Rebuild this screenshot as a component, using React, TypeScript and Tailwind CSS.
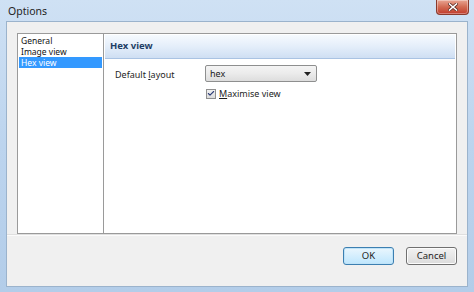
import { Check } from 'lucide-react';

const font = { fontFamily: '"Noto Sans", "DejaVu Sans", sans-serif' };

function CloseButton() {
  return (
    <div className="w-[33px] h-[15px] rounded-b-[4px] border border-t-0 border-[#8a3a2c] bg-gradient-to-b from-[#e8a593] via-[#d26a52] to-[#c0392b] flex items-center justify-center shadow-[inset_0_0_0_1px_rgba(255,255,255,0.35)]">
      <svg width="10" height="8" viewBox="0 0 10 8">
        <path d="M1.5 1 L8.5 7 M8.5 1 L1.5 7" stroke="#5a2a22" strokeWidth="3" strokeLinecap="square" />
        <path d="M1.5 1 L8.5 7 M8.5 1 L1.5 7" stroke="#ffffff" strokeWidth="1.6" strokeLinecap="square" />
      </svg>
    </div>
  );
}

function DialogButton({ label, active }: { label: string; active?: boolean }) {
  return (
    <button
      type="button"
      className={`w-[51px] h-[18px] rounded-[3px] border text-[9.5px] text-[#1e1e1e] flex items-center justify-center bg-gradient-to-b ${
        active
          ? 'border-[#3c7fb1] from-[#eaf6fd] to-[#bee6fd] shadow-[inset_0_0_0_1px_#bfe3f8]'
          : 'border-[#707070] from-[#f2f2f2] to-[#dcdcdc] shadow-[inset_0_0_0_1px_#fcfcfc]'
      }`}
    >
      {label}
    </button>
  );
}

export default function App() {
  const items = ['General', 'Image view', 'Hex view'];
  const selected = 2;

  return (
    <div
      className="w-[474px] h-[292px] flex flex-col bg-gradient-to-b from-[#cfe1f4] via-[#bcd4ee] to-[#b3cde9] px-[6px] pb-[5px] text-[#1a1a1a]"
      style={font}
    >
      <div className="h-[21px] flex items-start shrink-0">
        <span className="pl-[2px] pt-[4px] text-[10.5px] text-[#1e1e1e]">Options</span>
        <div className="ml-auto -mr-[1px]">
          <CloseButton />
        </div>
      </div>

      <div className="flex-1 flex flex-col bg-[#f0f0f0] border border-[#9bb3cc]">
        <div className="flex px-[10px] pt-[11px] h-[212px]">
          <div className="w-[87px] h-[201px] bg-white border border-[#9a9a9a] p-[1px]">
            {items.map((item, i) => (
              <div
                key={item}
                className={`h-[11px] leading-[11px] px-[2px] text-[8.5px] ${
                  i === selected ? 'bg-[#3399ff] text-white' : 'text-[#111]'
                }`}
              >
                {item}
              </div>
            ))}
          </div>
          <div className="flex-1 h-[201px] bg-white border border-l-0 border-[#9a9a9a] flex flex-col">
            <div className="h-[24px] mx-[1px] mt-[1px] bg-gradient-to-b from-[#f6fafe] via-[#e4eefa] to-[#cfdff3] border-b border-[#aac3e3] flex items-center pl-[5px]">
              <span className="text-[9.5px] font-bold text-[#1e3e66]">Hex view</span>
            </div>
            <div className="flex pl-[11px] pt-[6px]">
              <span className="w-[90px] pt-[3px] text-[9px] text-[#1e1e1e]">
                Default <span className="underline">l</span>ayout
              </span>
              <div className="flex flex-col gap-[5px]">
                <div className="w-[112px] h-[17px] rounded-[2px] border border-[#8e8f8f] bg-gradient-to-b from-[#f4f4f4] via-[#ebebeb] to-[#dddddd] flex items-center px-[4px]">
                  <span className="text-[9px]">hex</span>
                  <svg className="ml-auto mr-[1px]" width="7" height="4" viewBox="0 0 7 4">
                    <path d="M0 0 H7 L3.5 4 Z" fill="#222" />
                  </svg>
                </div>
                <div className="flex items-center gap-[3px] pl-[1px]">
                  <div className="w-[10px] h-[10px] border border-[#8f8f8f] bg-gradient-to-b from-[#f0f0f0] to-[#dcdcdc] flex items-center justify-center">
                    <Check size={9} strokeWidth={3.2} className="text-[#2d3d78]" />
                  </div>
                  <span className="text-[9px] text-[#1e1e1e]">
                    <span className="underline">M</span>aximise view
                  </span>
                </div>
              </div>
            </div>
          </div>
        </div>
        <div className="h-[1px] bg-[#dfdfdf]" />
        <div className="h-[1px] bg-[#fbfbfb]" />
        <div className="flex-1 flex items-start justify-end gap-[12px] pr-[10px] pt-[11px]">
          <DialogButton label="OK" active />
          <DialogButton label="Cancel" />
        </div>
      </div>
    </div>
  );
}
